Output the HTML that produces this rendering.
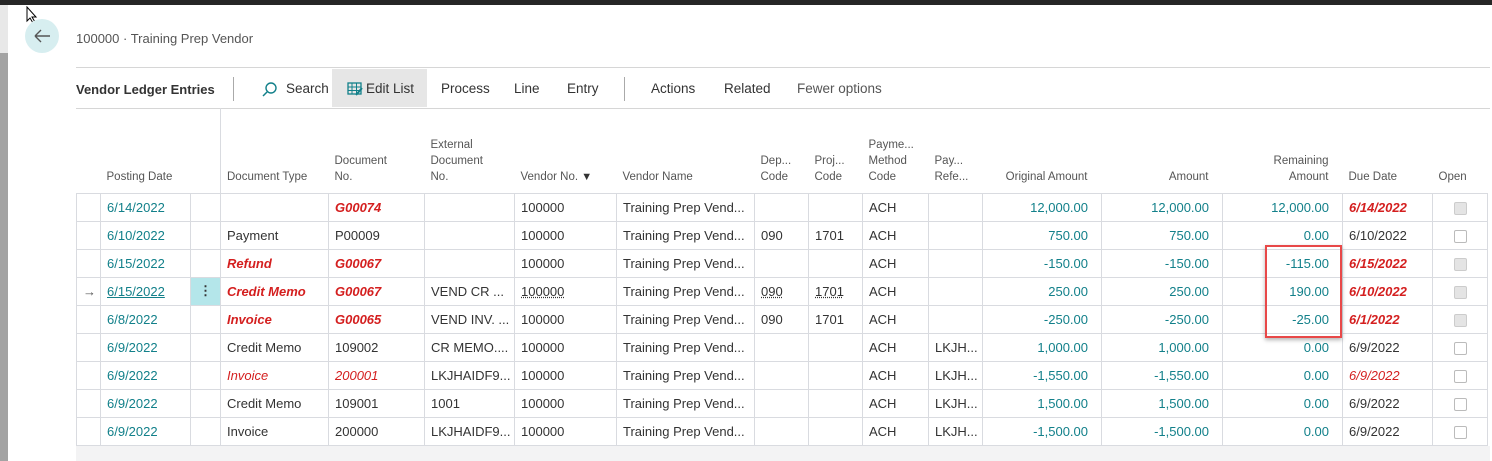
<!DOCTYPE html>
<html><head><meta charset="utf-8"><style>
*{margin:0;padding:0;box-sizing:border-box}
body{width:1492px;height:461px;overflow:hidden;background:#fff;font-family:"Liberation Sans",sans-serif;position:relative;color:#333}
.top{position:absolute;left:0;top:0;width:1492px;height:5px;background:#262626}
.lstrip{position:absolute;left:0;top:5px;width:8px;height:456px;background:#a3a3a3}
.lstrip2{position:absolute;left:0;top:5px;width:8px;height:48px;background:#e8e8e8}
.back{position:absolute;left:25px;top:19px;width:34px;height:34px;border-radius:50%;background:#d7eef0}
.title{position:absolute;left:76px;top:31px;font-size:13px;color:#555}
.hl{position:absolute;left:76px;width:1414px;height:1px;background:#d6d6d6}
.tb{position:absolute;top:81px;font-size:13.5px;color:#333}
.sep{position:absolute;top:77px;width:1px;height:24px;background:#aaa}
.edit{position:absolute;left:332px;top:69px;width:95px;height:38px;background:#e6e6e6}
table{position:absolute;left:76px;top:108px;width:1411px;border-collapse:collapse;table-layout:fixed;font-size:13px}
td{border:1px solid #d9dbe0;height:28px;padding:0 6px;white-space:nowrap;overflow:hidden}
th{height:85px;vertical-align:bottom;padding:0 6px 8px;font-weight:normal;font-size:11.5px;color:#555;text-align:left;line-height:16px;border-bottom:1px solid #d9dbe0;white-space:nowrap;overflow:hidden}
.r{text-align:right;padding-right:13px}
th.r{text-align:right;padding-right:14px}
.t{color:#12808a}
.red{color:#d41f1f;font-weight:bold;font-style:italic}
.ri{color:#d41f1f;font-style:italic}
.cb{display:inline-block;width:13px;height:13px;border:1px solid #bbb;border-radius:2px;background:#fff;vertical-align:middle}
.cb.c{background:#e4e4e4;border-color:#ccc}
.bottom{position:absolute;left:76px;top:446px;width:1414px;height:15px;background:#f3f3f4}
.box{position:absolute;left:1265px;top:245px;width:77px;height:93px;border:2px solid #e84848;box-shadow:0 2px 4px rgba(0,0,0,.3)}
</style></head><body>
<div class="top"></div><div class="lstrip"></div><div class="lstrip2"></div>
<svg style="position:absolute;left:26px;top:6px" width="12" height="18"><path d="M1 1 L1 15 L4 12 L7 17 L9 16 L6 11 L10 11 Z" fill="#fff" stroke="#000"/></svg>
<div class="back"></div>
<svg style="position:absolute;left:33px;top:27px" width="18" height="18"><path d="M2 9 H17 M2 9 L8 3 M2 9 L8 15" stroke="#555" stroke-width="1.4" fill="none"/></svg>
<div class="title">100000 · Training Prep Vendor</div>
<div class="hl" style="top:67px"></div>
<div class="hl" style="top:108px"></div>
<div class="tb" style="left:76px;font-weight:bold;font-size:13px;top:82px">Vendor Ledger Entries</div>
<div class="sep" style="left:233px"></div>
<div class="edit"></div>
<svg style="position:absolute;left:261px;top:81px" width="17" height="17"><circle cx="10" cy="7" r="5" stroke="#12808a" stroke-width="1.4" fill="none"/><path d="M6 11 L2 15" stroke="#12808a" stroke-width="1.5"/></svg>
<div class="tb" style="left:286px">Search</div>
<svg style="position:absolute;left:347px;top:82px" width="16" height="14"><rect x="1" y="1" width="13" height="11" fill="none" stroke="#12808a" stroke-width="1.3"/><path d="M1 5H14M1 8.5H14M5 1V12M9.5 1V12" stroke="#12808a"/><path d="M9 13 L15 6" stroke="#12808a" stroke-width="2"/></svg>
<div class="tb" style="left:366px">Edit List</div>
<div class="tb" style="left:441px">Process</div>
<div class="tb" style="left:514px">Line</div>
<div class="tb" style="left:567px">Entry</div>
<div class="sep" style="left:624px"></div>
<div class="tb" style="left:651px">Actions</div>
<div class="tb" style="left:724px">Related</div>
<div class="tb" style="left:797px;color:#555">Fewer options</div>
<table>
<colgroup><col style="width:24px"><col style="width:90px"><col style="width:30px"><col style="width:108px"><col style="width:96px"><col style="width:90px"><col style="width:102px"><col style="width:138px"><col style="width:54px"><col style="width:54px"><col style="width:66px"><col style="width:54px"><col style="width:119px"><col style="width:121px"><col style="width:120px"><col style="width:90px"><col style="width:55px"></colgroup>
<tr><th></th><th>Posting Date</th><th style="border-right:1px solid #d9dbe0"></th><th>Document Type</th><th>Document<br>No.</th><th>External<br>Document<br>No.</th><th>Vendor No. <span style="font-size:11px;color:#333">▼</span></th><th>Vendor Name</th><th>Dep...<br>Code</th><th>Proj...<br>Code</th><th>Payme...<br>Method<br>Code</th><th>Pay...<br>Refe...</th><th class="r">Original Amount</th><th class="r">Amount</th><th class="r">Remaining<br>Amount</th><th>Due Date</th><th>Open</th></tr>
<tr><td></td><td class="t">6/14/2022</td><td></td><td></td><td class="red">G00074</td><td></td><td>100000</td><td>Training Prep Vend...</td><td></td><td></td><td>ACH</td><td></td><td class="r t">12,000.00</td><td class="r t">12,000.00</td><td class="r t">12,000.00</td><td class="red">6/14/2022</td><td style="text-align:center"><span class="cb c"></span></td></tr>
<tr><td></td><td class="t">6/10/2022</td><td></td><td>Payment</td><td>P00009</td><td></td><td>100000</td><td>Training Prep Vend...</td><td>090</td><td>1701</td><td>ACH</td><td></td><td class="r t">750.00</td><td class="r t">750.00</td><td class="r t">0.00</td><td>6/10/2022</td><td style="text-align:center"><span class="cb"></span></td></tr>
<tr><td></td><td class="t">6/15/2022</td><td></td><td class="red">Refund</td><td class="red">G00067</td><td></td><td>100000</td><td>Training Prep Vend...</td><td></td><td></td><td>ACH</td><td></td><td class="r t">-150.00</td><td class="r t">-150.00</td><td class="r t">-115.00</td><td class="red">6/15/2022</td><td style="text-align:center"><span class="cb c"></span></td></tr>
<tr><td style="color:#555">→</td><td class="t" style="text-decoration:underline">6/15/2022</td><td style="background:#b4e6ea;text-align:center;font-weight:bold">⋮</td><td class="red">Credit Memo</td><td class="red">G00067</td><td>VEND CR ...</td><td style="text-decoration:underline dotted">100000</td><td>Training Prep Vend...</td><td style="text-decoration:underline dotted">090</td><td style="text-decoration:underline dotted">1701</td><td>ACH</td><td></td><td class="r t">250.00</td><td class="r t">250.00</td><td class="r t">190.00</td><td class="red">6/10/2022</td><td style="text-align:center"><span class="cb c"></span></td></tr>
<tr><td></td><td class="t">6/8/2022</td><td></td><td class="red">Invoice</td><td class="red">G00065</td><td>VEND INV. ...</td><td>100000</td><td>Training Prep Vend...</td><td>090</td><td>1701</td><td>ACH</td><td></td><td class="r t">-250.00</td><td class="r t">-250.00</td><td class="r t">-25.00</td><td class="red">6/1/2022</td><td style="text-align:center"><span class="cb c"></span></td></tr>
<tr><td></td><td class="t">6/9/2022</td><td></td><td>Credit Memo</td><td>109002</td><td>CR MEMO....</td><td>100000</td><td>Training Prep Vend...</td><td></td><td></td><td>ACH</td><td>LKJH...</td><td class="r t">1,000.00</td><td class="r t">1,000.00</td><td class="r t">0.00</td><td>6/9/2022</td><td style="text-align:center"><span class="cb"></span></td></tr>
<tr><td></td><td class="t">6/9/2022</td><td></td><td class="ri">Invoice</td><td class="ri">200001</td><td>LKJHAIDF9...</td><td>100000</td><td>Training Prep Vend...</td><td></td><td></td><td>ACH</td><td>LKJH...</td><td class="r t">-1,550.00</td><td class="r t">-1,550.00</td><td class="r t">0.00</td><td class="ri">6/9/2022</td><td style="text-align:center"><span class="cb"></span></td></tr>
<tr><td></td><td class="t">6/9/2022</td><td></td><td>Credit Memo</td><td>109001</td><td>1001</td><td>100000</td><td>Training Prep Vend...</td><td></td><td></td><td>ACH</td><td>LKJH...</td><td class="r t">1,500.00</td><td class="r t">1,500.00</td><td class="r t">0.00</td><td>6/9/2022</td><td style="text-align:center"><span class="cb"></span></td></tr>
<tr><td></td><td class="t">6/9/2022</td><td></td><td>Invoice</td><td>200000</td><td>LKJHAIDF9...</td><td>100000</td><td>Training Prep Vend...</td><td></td><td></td><td>ACH</td><td>LKJH...</td><td class="r t">-1,500.00</td><td class="r t">-1,500.00</td><td class="r t">0.00</td><td>6/9/2022</td><td style="text-align:center"><span class="cb"></span></td></tr>
</table>
<div class="bottom"></div>
<div class="box"></div>
</body></html>
